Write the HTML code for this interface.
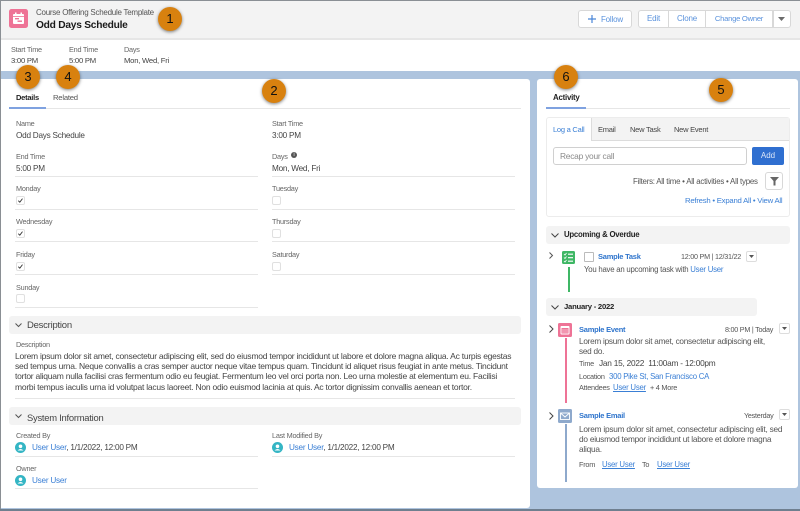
<!DOCTYPE html>
<html><head><meta charset="utf-8">
<style>
html,body{margin:0;padding:0;background:#aec4de}
#r{position:relative;width:800px;height:511px;overflow:hidden;background:#aec4de;font-family:"Liberation Sans",sans-serif;font-size:8px;color:#3e3e3c;filter:blur(.3px)}
#r div,#r span.t{position:absolute;white-space:nowrap}
.t{line-height:11px;letter-spacing:-.24px}
.l{color:#666;font-size:7.300px}
.v{color:#444;font-size:8.200px}
.hv{color:#444;font-size:7.700px}
.p{color:#444;font-size:8.500px;letter-spacing:-.24px}
.a{color:#3a7fd5}
.u{text-decoration:underline}
.hr{height:1px;background:#e6e6e6}
.cb,.ck{width:7px;height:7px;border:1px solid #e0e0e0;border-radius:2px;background:#fff}
.o{width:24px;height:24px;border-radius:50%;background:#d8810f;box-shadow:0 1px 3px rgba(0,0,0,.5);color:#111;font-size:13px;line-height:24px;text-align:center}
.sec{background:#f3f3f3;border-radius:3px;height:18px}
.btn{background:#fff;border:1px solid #d8d8d8;color:#5b93dd;font-size:8px;letter-spacing:-.2px;line-height:16px;text-align:center;height:16px;box-sizing:content-box}
svg{position:absolute;overflow:visible}
.ts{font-size:7.500px;font-weight:bold;color:#2e74cc}
.dt{font-size:7.200px;color:#555}
.bd{font-size:8.200px;color:#555}
.s1{font-size:7.800px;color:#555}
.tb{font-size:7.500px;color:#444}
.m{font-size:7.300px;color:#555}
.lk{font-size:7.800px;color:#3a7fd5}
</style></head><body>
<div id="r">
<!-- header -->
<div style="left:0;top:0;width:800px;height:38px;background:#f3f3f3;border-top:1px solid #8a8f94;box-sizing:border-box"></div>
<div style="left:0;top:38px;width:800px;height:2px;background:#e6e6e6"></div>
<div style="left:0;top:40px;width:800px;height:31px;background:#fff"></div>
<div style="left:0;top:0;width:1px;height:511px;background:#8a8f94"></div>
<div style="left:0;top:509px;width:800px;height:2px;background:#6f7f8f"></div>

<svg style="left:9px;top:9px" width="19" height="19" viewBox="0 0 19 19"><rect width="19" height="19" rx="2.500" fill="#ee7396"/><rect x="4" y="5" width="11" height="10" rx="1" fill="#fff"/><rect x="6" y="3.500" width="1.500" height="3" fill="#fff"/><rect x="11.500" y="3.500" width="1.500" height="3" fill="#fff"/><rect x="4" y="7" width="11" height=".8" fill="#ee7396"/><rect x="6" y="9" width="4" height="1.400" fill="#ee7396"/><rect x="8.500" y="11.500" width="4.500" height="1.400" fill="#ee7396"/></svg>
<span class="t" style="left:36px;top:7px;font-size:8px;letter-spacing:-.26px;color:#555">Course Offering Schedule Template</span>
<span class="t" style="left:36px;top:20px;font-size:10.200px;font-weight:bold;color:#1a1a1a">Odd Days Schedule</span>

<div class="btn" style="left:578px;top:10px;width:52px;border-radius:3px"></div>
<svg style="left:588px;top:15px" width="8" height="8"><path d="M4 0V8M0 4H8" stroke="#4a86d8" stroke-width="1.200"/></svg>
<span class="t" style="left:601px;top:14px;font-size:8px;letter-spacing:-.2px;color:#5b93dd">Follow</span>
<div class="btn" style="left:638px;top:10px;width:29px;border-radius:3px 0 0 3px">Edit</div>
<div class="btn" style="left:668px;top:10px;width:36px">Clone</div>
<div class="btn" style="left:705px;top:10px;width:66px;font-size:7.600px;letter-spacing:-.24px">Change Owner</div>
<div class="btn" style="left:773px;top:10px;width:16px;border-radius:0 3px 3px 0"></div>
<svg style="left:778px;top:17px" width="7" height="4"><path d="M0 0H7L3.500 4Z" fill="#6b6b6b"/></svg>

<span class="t l" style="left:11px;top:44px">Start Time</span>
<span class="t hv" style="left:11px;top:55px">3:00 PM</span>
<span class="t l" style="left:69px;top:44px">End Time</span>
<span class="t hv" style="left:69px;top:55px">5:00 PM</span>
<span class="t l" style="left:124px;top:44px">Days</span>
<span class="t hv" style="left:124px;top:55px">Mon, Wed, Fri</span>

<!-- left card -->
<div style="left:1px;top:79px;width:529px;height:429px;background:#fff;border-radius:0 3px 3px 0"></div>
<span class="t" style="left:16px;top:92px;font-weight:bold;font-size:7.500px;color:#222">Details</span>
<span class="t" style="left:53px;top:92px;font-size:7.700px;color:#555">Related</span>
<div class="hr" style="left:9px;top:108px;width:512px"></div>
<div style="left:9px;top:107px;width:37px;height:2px;background:#7fa2e0"></div>

<span class="t l" style="left:16px;top:118px">Name</span>
<span class="t v" style="left:16px;top:130px">Odd Days Schedule</span>
<span class="t l" style="left:272px;top:118px">Start Time</span>
<span class="t v" style="left:272px;top:130px">3:00 PM</span>
<span class="t l" style="left:16px;top:151px">End Time</span>
<span class="t v" style="left:16px;top:163px">5:00 PM</span>
<div class="hr" style="left:15px;top:176px;width:243px"></div>
<span class="t l" style="left:272px;top:151px">Days</span>
<div style="left:291px;top:152px;width:6px;height:6px;border-radius:50%;background:#555;color:#fff;font-size:5px;line-height:6px;text-align:center">i</div>
<span class="t v" style="left:272px;top:163px">Mon, Wed, Fri</span>
<div class="hr" style="left:272px;top:176px;width:243px"></div>

<span class="t l" style="left:16px;top:183px">Monday</span>
<div class="ck" style="left:16px;top:196px"></div>
<svg style="left:18px;top:198px" width="5" height="5"><path d="M.3 2.700L1.800 4.200L4.500 .6" fill="none" stroke="#333" stroke-width=".9"/></svg>
<div class="hr" style="left:15px;top:209px;width:243px"></div>
<span class="t l" style="left:272px;top:183px">Tuesday</span>
<div class="cb" style="left:272px;top:196px"></div>
<div class="hr" style="left:272px;top:209px;width:243px"></div>

<span class="t l" style="left:16px;top:216px">Wednesday</span>
<div class="ck" style="left:16px;top:229px"></div>
<svg style="left:18px;top:231px" width="5" height="5"><path d="M.3 2.700L1.800 4.200L4.500 .6" fill="none" stroke="#333" stroke-width=".9"/></svg>
<div class="hr" style="left:15px;top:241px;width:243px"></div>
<span class="t l" style="left:272px;top:216px">Thursday</span>
<div class="cb" style="left:272px;top:229px"></div>
<div class="hr" style="left:272px;top:241px;width:243px"></div>

<span class="t l" style="left:16px;top:249px">Friday</span>
<div class="ck" style="left:16px;top:262px"></div>
<svg style="left:18px;top:264px" width="5" height="5"><path d="M.3 2.700L1.800 4.200L4.500 .6" fill="none" stroke="#333" stroke-width=".9"/></svg>
<div class="hr" style="left:15px;top:274px;width:243px"></div>
<span class="t l" style="left:272px;top:249px">Saturday</span>
<div class="cb" style="left:272px;top:262px"></div>
<div class="hr" style="left:272px;top:274px;width:243px"></div>

<span class="t l" style="left:16px;top:282px">Sunday</span>
<div class="cb" style="left:16px;top:294px"></div>
<div class="hr" style="left:15px;top:307px;width:243px"></div>

<div class="sec" style="left:9px;top:316px;width:512px"></div>
<svg style="left:15px;top:323px" width="7" height="4"><path d="M.5 .5L3.500 3.500L6.500 .5" fill="none" stroke="#555"/></svg>
<span class="t" style="left:27px;top:320px;font-size:9.500px;color:#444">Description</span>
<span class="t l" style="left:16px;top:339px">Description</span>
<span class="t p" style="left:15px;top:351px">Lorem ipsum dolor sit amet, consectetur adipiscing elit, sed do eiusmod tempor incididunt ut labore et dolore magna aliqua. Ac turpis egestas</span>
<span class="t p" style="left:15px;top:361px">sed tempus urna. Neque convallis a cras semper auctor neque vitae tempus quam. Tincidunt id aliquet risus feugiat in ante metus. Tincidunt</span>
<span class="t p" style="left:15px;top:371px">tortor aliquam nulla facilisi cras fermentum odio eu feugiat. Fermentum leo vel orci porta non. Leo urna molestie at elementum eu. Facilisi</span>
<span class="t p" style="left:15px;top:382px">morbi tempus iaculis urna id volutpat lacus laoreet. Non odio euismod lacinia at quis. Ac tortor dignissim convallis aenean et tortor.</span>
<div class="hr" style="left:15px;top:398px;width:500px"></div>

<div class="sec" style="left:9px;top:407px;width:512px"></div>
<svg style="left:15px;top:414px" width="7" height="4"><path d="M.5 .5L3.500 3.500L6.500 .5" fill="none" stroke="#555"/></svg>
<span class="t" style="left:27px;top:412px;font-size:9.400px;color:#444">System Information</span>

<span class="t l" style="left:16px;top:430px">Created By</span>
<svg style="left:15px;top:442px" width="11" height="11"><circle cx="5.500" cy="5.500" r="5.500" fill="#34b5c4"/><circle cx="5.500" cy="4.300" r="1.800" fill="#fff"/><path d="M2.500 8.500Q5.500 5.500 8.500 8.500Z" fill="#fff"/></svg>
<span class="t v" style="left:32px;top:442px"><span class="a">User User</span>, 1/1/2022, 12:00 PM</span>
<div class="hr" style="left:15px;top:456px;width:243px"></div>
<span class="t l" style="left:272px;top:430px">Last Modified By</span>
<svg style="left:272px;top:442px" width="11" height="11"><circle cx="5.500" cy="5.500" r="5.500" fill="#34b5c4"/><circle cx="5.500" cy="4.300" r="1.800" fill="#fff"/><path d="M2.500 8.500Q5.500 5.500 8.500 8.500Z" fill="#fff"/></svg>
<span class="t v" style="left:289px;top:442px"><span class="a">User User</span>, 1/1/2022, 12:00 PM</span>
<div class="hr" style="left:272px;top:456px;width:243px"></div>
<span class="t l" style="left:16px;top:463px">Owner</span>
<svg style="left:15px;top:475px" width="11" height="11"><circle cx="5.500" cy="5.500" r="5.500" fill="#34b5c4"/><circle cx="5.500" cy="4.300" r="1.800" fill="#fff"/><path d="M2.500 8.500Q5.500 5.500 8.500 8.500Z" fill="#fff"/></svg>
<span class="t v" style="left:32px;top:475px;color:#3a7fd5">User User</span>
<div class="hr" style="left:15px;top:488px;width:243px"></div>

<!-- right card -->
<div style="left:537px;top:79px;width:261px;height:409px;background:#fff;border-radius:3px"></div>
<span class="t" style="left:553px;top:92px;font-weight:bold;font-size:7.900px;color:#222">Activity</span>
<div class="hr" style="left:546px;top:108px;width:244px"></div>
<div style="left:546px;top:107px;width:40px;height:2px;background:#7fa2e0"></div>

<div style="left:546px;top:117px;width:244px;height:100px;border:1px solid #ececec;border-radius:3px;box-sizing:border-box"></div>
<div style="left:592px;top:118px;width:197px;height:23px;background:#f3f3f3;border-bottom:1px solid #dcdcdc;box-sizing:border-box"></div>
<div style="left:591px;top:118px;width:1px;height:23px;background:#dcdcdc"></div>
<span class="t tb" style="left:553px;top:124px;color:#3a7fd5">Log a Call</span>
<span class="t tb" style="left:598px;top:124px">Email</span>
<span class="t tb" style="left:630px;top:124px">New Task</span>
<span class="t tb" style="left:674px;top:124px">New Event</span>

<div style="left:553px;top:147px;width:194px;height:18px;border:1px solid #d0d0d0;border-radius:3px;box-sizing:border-box"></div>
<span class="t" style="left:560px;top:151px;font-size:8.400px;color:#8a8a8a">Recap your call</span>
<div style="left:752px;top:147px;width:32px;height:18px;background:#2f6fd0;border-radius:2px;color:#dbe6f8;font-size:8px;line-height:18px;text-align:center">Add</div>
<span class="t" style="left:633px;top:176px;font-size:7.900px;color:#555">Filters: All time &#8226; All activities &#8226; All types</span>
<div style="left:765px;top:172px;width:18px;height:18px;border:1px solid #d8d8d8;border-radius:3px;box-sizing:border-box;background:#fff"></div>
<svg style="left:770px;top:177px" width="9" height="9"><path d="M0 0H9L5.500 4V8.500H3.500V4Z" fill="#666"/></svg>
<span class="t lk" style="left:685px;top:195px;font-size:7.750px">Refresh &#8226; Expand All &#8226; View All</span>

<div class="sec" style="left:546px;top:226px;width:244px"></div>
<svg style="left:551px;top:233px" width="8" height="5"><path d="M.5 .5L4 4L7.500 .5" fill="none" stroke="#444"/></svg>
<span class="t" style="left:564px;top:229px;font-size:7.800px;font-weight:bold;color:#222">Upcoming &amp; Overdue</span>

<svg style="left:549px;top:252px" width="4" height="7"><path d="M.5 .5L3.500 3.500L.5 6.500" fill="none" stroke="#555"/></svg>
<svg style="left:562px;top:251px" width="13" height="13"><rect width="13" height="13" rx="1.500" fill="#3fb765"/><path d="M2 3L3 4L4.500 2M2 6.500L3 7.500L4.500 5.500M2 10L3 11L4.500 9" stroke="#fff" fill="none" stroke-width=".8"/><path d="M6 3.200H11M6 6.700H11M6 10.200H11" stroke="#fff" stroke-width="1.100"/></svg>
<div style="left:568px;top:267px;width:1.500px;height:25px;background:#3fb765"></div>
<div style="left:584px;top:252px;width:8px;height:8px;border:1px solid #bbb;border-radius:1px"></div>
<span class="t ts" style="left:598px;top:251px">Sample Task</span>
<span class="t dt" style="left:681px;top:251px">12:00 PM | 12/31/22</span>
<div style="left:746px;top:251px;width:9px;height:9px;border:1px solid #ddd;border-radius:2px"></div>
<svg style="left:749px;top:255px" width="5" height="3"><path d="M0 0H5L2.500 3Z" fill="#555"/></svg>
<span class="t s1" style="left:584px;top:264px">You have an upcoming task with <span class="a">User User</span></span>

<div class="sec" style="left:546px;top:298px;width:211px"></div>
<svg style="left:551px;top:305px" width="8" height="5"><path d="M.5 .5L4 4L7.500 .5" fill="none" stroke="#444"/></svg>
<span class="t" style="left:564px;top:301px;font-size:7.700px;font-weight:bold;color:#222">January - 2022</span>

<svg style="left:549px;top:325px" width="5" height="8"><path d="M.5 .5L4 4L.5 7.500" fill="none" stroke="#444"/></svg>
<svg style="left:558px;top:323px" width="14" height="14"><rect width="14" height="14" rx="1.500" fill="#ee7396"/><rect x="3" y="3.500" width="8" height="7.500" rx=".5" fill="none" stroke="#fff"/><rect x="3" y="3" width="8" height="2" fill="#fff"/><path d="M4.500 7H9.500M4.500 9H9.500" stroke="#fff" stroke-dasharray="1 1"/></svg>
<div style="left:565px;top:338px;width:1.500px;height:65px;background:#ee7396"></div>
<span class="t ts" style="left:579px;top:324px">Sample Event</span>
<span class="t dt" style="left:725px;top:324px">8:00 PM | Today</span>
<div style="left:779px;top:323px;width:9px;height:9px;border:1px solid #ddd;border-radius:2px"></div>
<svg style="left:782px;top:327px" width="5" height="3"><path d="M0 0H5L2.500 3Z" fill="#555"/></svg>
<span class="t bd" style="left:579px;top:336px">Lorem ipsum dolor sit amet, consectetur adipiscing elit,</span>
<span class="t bd" style="left:579px;top:346px">sed do.</span>
<span class="t m" style="left:579px;top:358px">Time</span>
<span class="t" style="left:599px;top:358px;font-size:8.300px;color:#444">Jan 15, 2022&nbsp; 11:00am - 12:00pm</span>
<span class="t m" style="left:579px;top:371px">Location</span>
<span class="t lk" style="left:609px;top:371px">300 Pike St, San Francisco CA</span>
<span class="t m" style="left:579px;top:382px">Attendees</span>
<span class="t lk u" style="left:613px;top:382px">User User</span>
<span class="t m" style="left:650px;top:382px">+ 4 More</span>

<svg style="left:549px;top:412px" width="5" height="8"><path d="M.5 .5L4 4L.5 7.500" fill="none" stroke="#444"/></svg>
<svg style="left:558px;top:409px" width="14" height="14"><rect width="14" height="14" rx="1.500" fill="#8ea9cc"/><rect x="2.500" y="4" width="9" height="6.500" fill="none" stroke="#fff" stroke-width=".9"/><path d="M2.500 4L7 8L11.500 4" fill="none" stroke="#fff" stroke-width=".9"/></svg>
<div style="left:565px;top:424px;width:1.500px;height:58px;background:#8ea9cc"></div>
<span class="t ts" style="left:579px;top:410px">Sample Email</span>
<span class="t dt" style="left:744px;top:410px">Yesterday</span>
<div style="left:779px;top:409px;width:9px;height:9px;border:1px solid #ddd;border-radius:2px"></div>
<svg style="left:782px;top:413px" width="5" height="3"><path d="M0 0H5L2.500 3Z" fill="#555"/></svg>
<span class="t bd" style="left:579px;top:424px;font-size:8.300px">Lorem ipsum dolor sit amet, consectetur adipiscing elit, sed</span>
<span class="t bd" style="left:579px;top:434px;font-size:8.300px">do eiusmod tempor incididunt ut labore et dolore magna</span>
<span class="t bd" style="left:579px;top:444px;font-size:8.300px">aliqua.</span>
<span class="t m" style="left:579px;top:459px">From</span>
<span class="t lk u" style="left:602px;top:459px">User User</span>
<span class="t m" style="left:642px;top:459px">To</span>
<span class="t lk u" style="left:657px;top:459px">User User</span>

<!-- callouts -->
<div class="o" style="left:158px;top:7px">1</div>
<div class="o" style="left:262px;top:79px">2</div>
<div class="o" style="left:16px;top:65px">3</div>
<div class="o" style="left:56px;top:65px">4</div>
<div class="o" style="left:709px;top:78px">5</div>
<div class="o" style="left:554px;top:65px">6</div>
</div>
</body></html>
